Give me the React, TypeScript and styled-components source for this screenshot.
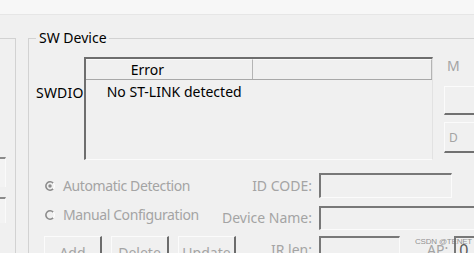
import React from 'react';
import styled, { createGlobalStyle } from 'styled-components';

const GlobalStyle = createGlobalStyle`
  html, body {
    margin: 0;
    padding: 0;
    background: #f0f0f0;
    overflow: hidden;
  }
`;

const DISABLED = '#a4a4a4';

const Window = styled.div`
  position: relative;
  width: 474px;
  height: 253px;
  overflow: hidden;
  background: #f0f0f0;
  font-family: 'Noto Sans', 'Segoe UI', sans-serif;
  font-size: 14px;
  color: #000;
`;

const TopStrip = styled.div`
  height: 14px;
  background: #f7f7f7;
  border-bottom: 1px solid #e6e6e6;
`;

const Body = styled.div`
  display: flex;
  align-items: flex-start;
  padding-top: 14px;
`;

const SideGroup = styled.div`
  box-sizing: border-box;
  width: 16px;
  height: 230px;
  margin-top: 9px;
  margin-right: 12px;
  border-top: 1px solid #d2d2d2;
  border-right: 1px solid #d2d2d2;
  display: flex;
  flex-direction: column;
  gap: 10px;
  padding-top: 118px;
`;

const SideField = styled.div<{ $h: number }>`
  box-sizing: border-box;
  width: 6px;
  height: ${p => p.$h}px;
  border-top: 2px solid #8a8a8a;
  border-right: 1px solid #fafafa;
  background: #f3f3f3;
`;

const Group = styled.fieldset`
  flex: 1;
  margin: 0;
  min-width: 0;
  height: 240px;
  padding: 10px 0 0 7px;
  border: 1px solid #d2d2d2;
  border-right: none;
  border-bottom: none;
`;

const Legend = styled.legend`
  padding: 0 2px 0 3px;
  line-height: 18px;
  color: #000;
`;

const TopRow = styled.div`
  display: flex;
  align-items: flex-start;
`;

const PortLabel = styled.div`
  width: 50px;
  margin-top: 27px;
  line-height: 18px;
  letter-spacing: 0.2px;
`;

const Table = styled.div`
  box-sizing: border-box;
  width: 366px;
  height: 103px;
  border-top: 2px solid #6e6e6e;
  border-left: 2px solid #6e6e6e;
  border-right: 1px solid #e2e2e2;
  border-bottom: 1px solid #fbfbfb;
`;

const HeaderRow = styled.div`
  display: flex;
  height: 20px;
  border-bottom: 1px solid #a8a8a8;
`;

const HeaderCell = styled.div<{ $w?: number }>`
  box-sizing: border-box;
  ${p => (p.$w ? `width: ${p.$w}px;` : 'flex: 1;')}
  padding-left: 45px;
  line-height: 20px;
  border-right: 1px solid #b4b4b4;
  border-top: 1px solid #fafafa;
`;

const DataRow = styled.div`
  padding-left: 21px;
  line-height: 24px;
`;

const SideColumn = styled.div`
  display: flex;
  flex-direction: column;
  margin-left: 11px;
`;

const SideLabel = styled.div`
  padding-left: 3px;
  line-height: 18px;
  color: ${DISABLED};
`;

const SideButton = styled.div<{ $h: number; $top: number }>`
  box-sizing: border-box;
  width: 30px;
  height: ${p => p.$h}px;
  margin-top: ${p => p.$top}px;
  border-top: 1px solid #fbfbfb;
  border-left: 1px solid #fbfbfb;
  border-bottom: 2px solid #717171;
  color: ${DISABLED};
  font-size: 12px;
  padding: 6px 0 0 4px;
`;

const Lower = styled.div`
  display: grid;
  grid-template-columns: 183px 86px 1fr;
  grid-template-rows: 25px 24px 28px;
  column-gap: 7px;
  row-gap: 6px;
  margin-top: 13px;
  & > :nth-child(n + 4) {
    margin-top: 2px;
  }
`;

const Radio = styled.label<{ $align: string }>`
  display: flex;
  align-items: center;
  gap: 8px;
  padding-left: 9px;
  align-self: ${p => p.$align};
  line-height: 18px;
  color: ${DISABLED};
  white-space: nowrap;
  letter-spacing: -0.4px;
`;

const FieldLabel = styled.div`
  display: flex;
  justify-content: flex-end;
  align-items: center;
  color: ${DISABLED};
  white-space: nowrap;
`;

const Input = styled.div<{ $w: number }>`
  box-sizing: border-box;
  width: ${p => p.$w}px;
  height: 100%;
  border-top: 2px solid #787878;
  border-left: 2px solid #787878;
  border-right: 1px solid #fbfbfb;
  border-bottom: 1px solid #fbfbfb;
  background: #f0f0f0;
  color: #5a5a5a;
  padding-left: 3px;
  line-height: 24px;
  font-size: 16px;
`;

const ButtonRow = styled.div`
  display: flex;
  gap: 9px;
  padding-left: 8px;
`;

const Button = styled.div`
  box-sizing: border-box;
  flex: 0 0 58px;
  height: 30px;
  border-top: 1px solid #fbfbfb;
  border-left: 1px solid #fbfbfb;
  border-right: 2px solid #6c6c6c;
  color: ${DISABLED};
  text-align: center;
  line-height: 28px;
  padding-top: 2px;
`;

const InlineFields = styled.div`
  display: flex;
  align-items: stretch;
`;

const InlineLabel = styled.div`
  margin: 0 6px 0 27px;
  display: flex;
  align-items: center;
  color: ${DISABLED};
`;

const Watermark = styled.div`
  position: absolute;
  left: 415px;
  top: 237px;
  font-family: 'Liberation Sans', Arial, sans-serif;
  font-size: 8px;
  color: rgba(110, 110, 110, 0.75);
  letter-spacing: -0.2px;
`;

const RadioMark: React.FC<{ checked?: boolean }> = ({ checked }) => (
  <svg width="10" height="10" viewBox="0 0 10 10">
    <path d="M8.2 2.2 A4.2 4.2 0 1 0 8.2 7.8" fill="none" stroke="#8c8c8c" strokeWidth="1.6" />
    <path d="M8.2 2.2 A4.2 4.2 0 0 1 8.2 7.8" fill="none" stroke="#fdfdfd" strokeWidth="1.2" />
    {checked && <circle cx="5" cy="5" r="1.7" fill="#8c8c8c" />}
  </svg>
);

export default function App() {
  return (
    <Window>
      <GlobalStyle />
      <TopStrip />
      <Body>
        <SideGroup>
          <SideField $h={30} />
          <SideField $h={26} />
        </SideGroup>
        <Group>
          <Legend>SW Device</Legend>
          <TopRow>
            <PortLabel>SWDIO</PortLabel>
            <Table>
              <HeaderRow>
                <HeaderCell $w={167}>Error</HeaderCell>
                <HeaderCell />
              </HeaderRow>
              <DataRow>No ST-LINK detected</DataRow>
            </Table>
            <SideColumn>
              <SideLabel>M</SideLabel>
              <SideButton $h={29} $top={11} />
              <SideButton $h={31} $top={7}>D</SideButton>
            </SideColumn>
          </TopRow>
          <Lower>
            <Radio $align="center">
              <RadioMark checked />
              Automatic Detection
            </Radio>
            <FieldLabel>ID CODE:</FieldLabel>
            <Input $w={133} />
            <Radio $align="start">
              <RadioMark />
              Manual Configuration
            </Radio>
            <FieldLabel>Device Name:</FieldLabel>
            <Input $w={170} />
            <ButtonRow>
              <Button>Add</Button>
              <Button>Delete</Button>
              <Button>Update</Button>
            </ButtonRow>
            <FieldLabel>IR len:</FieldLabel>
            <InlineFields>
              <Input $w={81} />
              <InlineLabel>AP:</InlineLabel>
              <Input $w={40}>0</Input>
            </InlineFields>
          </Lower>
        </Group>
      </Body>
      <Watermark>CSDN @TENET</Watermark>
    </Window>
  );
}
